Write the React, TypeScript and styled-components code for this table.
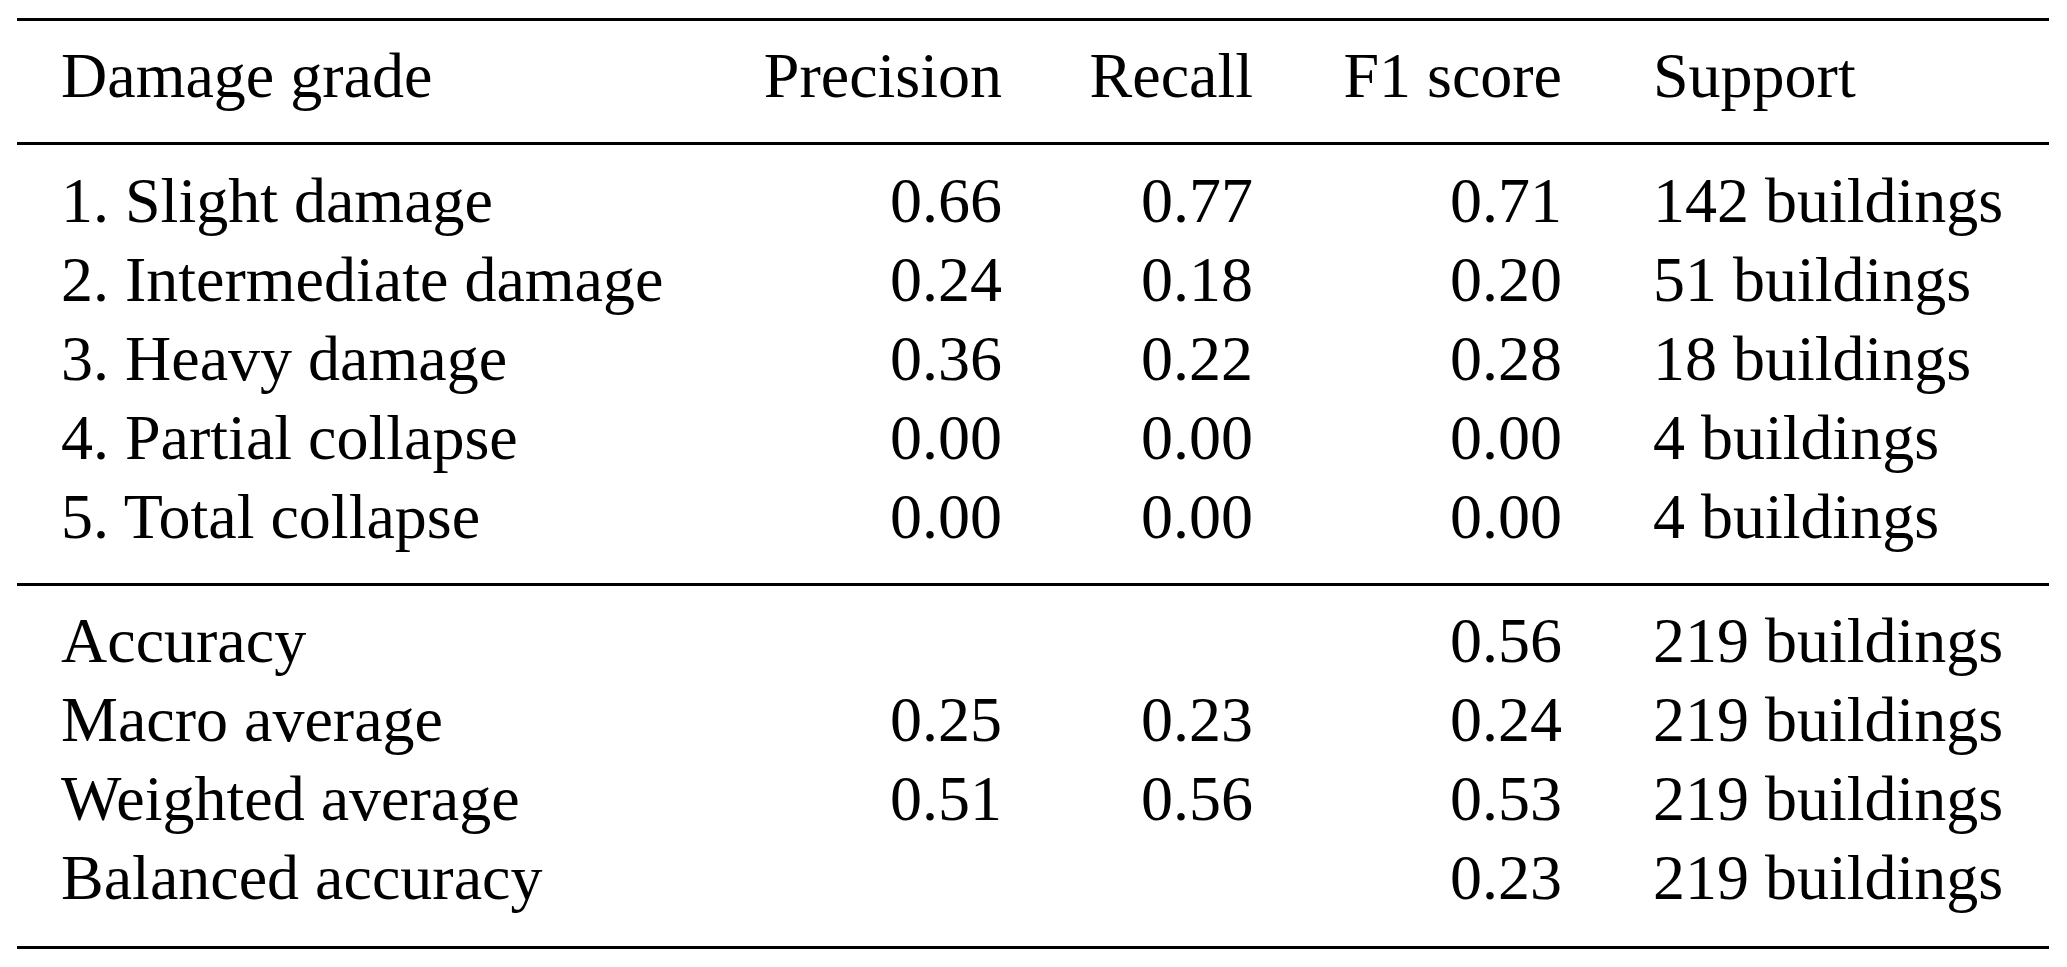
import React from "react";
import styled, { createGlobalStyle } from "styled-components";

const GlobalStyle = createGlobalStyle`
  html, body {
    margin: 0;
    padding: 0;
    background: #ffffff;
  }
  body {
    font-family: "Liberation Serif", "Times New Roman", serif;
    color: #000000;
  }
`;

const Page = styled.div`
  padding: 18px 0 0 17px;
  background: #ffffff;
`;

const Table = styled.div`
  width: 2032px;
  border-top: 3px solid #000;
  border-bottom: 3px solid #000;
  font-family: "Liberation Serif", "Times New Roman", serif;
  font-size: 64px;
  line-height: 79px;
  color: #000;
`;

const Section = styled.div<{ $top: number; $bottom: number; $rule?: boolean }>`
  padding: ${(p) => p.$top}px 0 ${(p) => p.$bottom}px;
  border-bottom: ${(p) => (p.$rule ? "3px solid #000" : "none")};
`;

const Row = styled.div`
  display: grid;
  grid-template-columns: 699px 242px 251px 309px 1fr;
  padding-left: 44px;
  padding-right: 46px;
  height: 79px;
  white-space: nowrap;
`;

const Cell = styled.div<{ $align?: "left" | "right"; $pad?: number }>`
  text-align: ${(p) => p.$align ?? "left"};
  padding-left: ${(p) => p.$pad ?? 0}px;
`;

type Line = {
  label: string;
  precision: string;
  recall: string;
  f1: string;
  support: string;
};

const classes: Line[] = [
  { label: "1. Slight damage", precision: "0.66", recall: "0.77", f1: "0.71", support: "142 buildings" },
  { label: "2. Intermediate damage", precision: "0.24", recall: "0.18", f1: "0.20", support: "51 buildings" },
  { label: "3. Heavy damage", precision: "0.36", recall: "0.22", f1: "0.28", support: "18 buildings" },
  { label: "4. Partial collapse", precision: "0.00", recall: "0.00", f1: "0.00", support: "4 buildings" },
  { label: "5. Total collapse", precision: "0.00", recall: "0.00", f1: "0.00", support: "4 buildings" },
];

const summary: Line[] = [
  { label: "Accuracy", precision: "", recall: "", f1: "0.56", support: "219 buildings" },
  { label: "Macro average", precision: "0.25", recall: "0.23", f1: "0.24", support: "219 buildings" },
  { label: "Weighted average", precision: "0.51", recall: "0.56", f1: "0.53", support: "219 buildings" },
  { label: "Balanced accuracy", precision: "", recall: "", f1: "0.23", support: "219 buildings" },
];

const DataRow = ({ line }: { line: Line }) => (
  <Row>
    <Cell>{line.label}</Cell>
    <Cell $align="right">{line.precision}</Cell>
    <Cell $align="right">{line.recall}</Cell>
    <Cell $align="right">{line.f1}</Cell>
    <Cell $pad={91}>{line.support}</Cell>
  </Row>
);

export default function App() {
  return (
    <>
      <GlobalStyle />
      <Page>
        <Table>
          <Section $top={15} $bottom={27} $rule>
            <Row>
              <Cell>Damage grade</Cell>
              <Cell $align="right">Precision</Cell>
              <Cell $align="right">Recall</Cell>
              <Cell $align="right">F1 score</Cell>
              <Cell $pad={91}>Support</Cell>
            </Row>
          </Section>
          <Section $top={16} $bottom={27} $rule>
            {classes.map((l) => (
              <DataRow key={l.label} line={l} />
            ))}
          </Section>
          <Section $top={15} $bottom={29}>
            {summary.map((l) => (
              <DataRow key={l.label} line={l} />
            ))}
          </Section>
        </Table>
      </Page>
    </>
  );
}
